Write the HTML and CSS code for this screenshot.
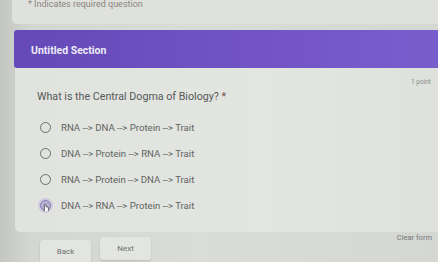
FILE: index.html
```html
<!DOCTYPE html>
<html>
<head>
<meta charset="utf-8">
<link rel="stylesheet" href="styles.css">
</head>
<body>
<div class="page">
  <div class="top-card">
    <span class="req">* Indicates required question</span>
  </div>
  <div class="section-bar">Untitled Section</div>
  <div class="q-card">
    <div class="q-head">
      <div class="q-title">What is the Central Dogma of Biology? <span class="star">*</span></div>
      <div class="points">1 point</div>
    </div>
    <div class="options">
      <div class="opt"><span class="radio"></span><span class="lbl">RNA --&gt; DNA --&gt; Protein --&gt; Trait</span></div>
      <div class="opt"><span class="radio"></span><span class="lbl">DNA --&gt; Protein --&gt; RNA --&gt; Trait</span></div>
      <div class="opt"><span class="radio"></span><span class="lbl">RNA --&gt; Protein --&gt; DNA --&gt; Trait</span></div>
      <div class="opt"><span class="radio hover"><svg class="hand" viewBox="0 0 10 12" width="8" height="10"><path d="M3 11 L3 4 Q3 2.6 4 2.6 Q5 2.6 5 4 L5 6 Q6 5.2 7 6 Q8 6.5 8 8 L8 11" fill="#fff" stroke="#333" stroke-width="0.9"/></svg></span><span class="lbl">DNA --&gt; RNA --&gt; Protein --&gt; Trait</span></div>
    </div>
  </div>
  <div class="footer">
    <div class="btns">
      <div class="btn back">Back</div>
      <div class="btn next">Next</div>
    </div>
    <div class="clear">Clear form</div>
  </div>
</div>
</body>
</html>
```
FILE: styles.css
```css
html, body {
  margin: 0;
  padding: 0;
}
body {
  width: 438px;
  height: 262px;
  overflow: hidden;
  font-family: Roboto, "Liberation Sans", sans-serif;
  background: linear-gradient(90deg, #c3c6c1 0px, #d3d6d1 30px, #d9dcd7 200px, #d4d7d2 438px);
}
.page {
  padding-left: 12px;
  display: flex;
  flex-direction: column;
}
.top-card {
  height: 24px;
  background: #dfe1dc;
  border-radius: 0 0 0 5px;
  padding-left: 16px;
  display: flex;
  align-items: flex-start;
}
.req {
  font-size: 9px;
  color: #8a8580;
  line-height: 9px;
}
.section-bar {
  margin-top: 6px;
  margin-left: 2px;
  height: 38px;
  background: linear-gradient(90deg, #6549b8 0%, #7254c6 60%, #7a5dcd 100%);
  border-radius: 3px 0 0 3px;
  color: #ecebf5;
  font-weight: bold;
  font-size: 10.5px;
  padding-left: 17px;
  display: flex;
  align-items: center;
  padding-top: 2px;
  box-sizing: border-box;
}
.q-card {
  margin-left: 3px;
  background: linear-gradient(90deg, #e1e3de 0%, #e3e5e0 60%, #dfe1dc 100%);
  border-radius: 0 0 0 5px;
  height: 164px;
  padding-left: 22px;
  box-sizing: border-box;
}
.q-head {
  display: flex;
  justify-content: space-between;
  padding-top: 8px;
}
.q-title {
  font-size: 10.7px;
  color: #55595a;
  padding-top: 14px;
}
.star { color: #7a4a4a; }
.points {
  font-size: 6.5px;
  color: #8a8c89;
  padding-right: 7px;
  padding-top: 2px;
}
.options {
  display: flex;
  flex-direction: column;
  gap: 13px;
  padding-top: 18px;
  padding-left: 3px;
}
.opt {
  display: flex;
  align-items: center;
  gap: 10px;
  height: 13px;
}
.radio {
  width: 9px;
  height: 9px;
  border: 1.6px solid #6c6f6d;
  border-radius: 50%;
  flex: none;
  position: relative;
}
.radio.hover {
  border-color: #8b80b5;
  background: #b6b0d2;
  box-shadow: 0 0 0 2px #cdc9de;
}
.hand {
  position: absolute;
  left: 1px;
  top: 1px;
}
.lbl {
  font-size: 9.6px;
  color: #5f6362;
}
.footer {
  display: flex;
  justify-content: space-between;
  align-items: flex-start;
  padding-top: 1px;
  padding-right: 6px;
}
.btns {
  display: flex;
  gap: 9px;
  padding-left: 28px;
  padding-top: 7px;
}
.btn {
  width: 51px;
  height: 23px;
  background: #e3e5e1;
  border-radius: 3px;
  box-shadow: 0 1px 2px rgba(0,0,0,0.15);
  font-size: 8px;
  color: #6d7170;
  display: flex;
  align-items: center;
  justify-content: center;
}
.btn.next { margin-top: -3px; }
.clear {
  font-size: 7.5px;
  color: #75777a;
}
```
